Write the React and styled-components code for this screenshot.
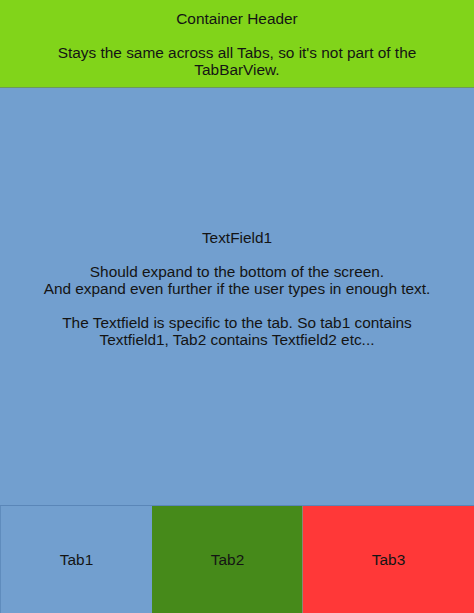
import React from 'react';
import styled, { createGlobalStyle } from 'styled-components';

const GlobalStyle = createGlobalStyle`
  html, body, #root {
    margin: 0;
    height: 100%;
  }
  body {
    font-family: 'Liberation Sans', Arial, sans-serif;
    font-size: 15.4px;
    line-height: 17px;
    color: #141414;
  }
`;

const Screen = styled.div`
  display: flex;
  flex-direction: column;
  height: 100%;
`;

const Header = styled.header`
  background: #81d41a;
  border-bottom: 1px solid #6d9a5a;
  padding: 10px 16px 9px;
  text-align: center;
`;

const Line = styled.p`
  margin: 0;
  & + & {
    margin-top: ${({ $gap }) => ($gap ? '17px' : '0')};
  }
`;

const TabBody = styled.main`
  flex: 1;
  background: #729fcf;
  display: flex;
  flex-direction: column;
  align-items: center;
  justify-content: center;
  padding-bottom: 16px;
  text-align: center;
`;

const TabBar = styled.nav`
  display: grid;
  grid-template-columns: 152px 150px 1fr;
  height: 107px;
  border-top: 1px solid #5a86b8;
`;

const Tab = styled.button`
  border: none;
  border-left: 1px solid ${({ $edge }) => $edge};
  background: ${({ $bg }) => $bg};
  font: inherit;
  color: #141414;
  padding: 0;
  display: flex;
  align-items: center;
  justify-content: center;
`;

const tabs = [
  { label: 'Tab1', bg: '#729fcf', edge: '#5f8cbd' },
  { label: 'Tab2', bg: '#468a1a', edge: '#468a1a' },
  { label: 'Tab3', bg: '#ff3838', edge: '#8a8a70' },
];

export default function App() {
  return (
    <Screen>
      <GlobalStyle />
      <Header>
        <Line>Container Header</Line>
        <Line $gap>
          Stays the same across all Tabs, so it's not part of the
          <br />
          TabBarView.
        </Line>
      </Header>
      <TabBody>
        <Line>TextField1</Line>
        <Line $gap>
          Should expand to the bottom of the screen.
          <br />
          And expand even further if the user types in enough text.
        </Line>
        <Line $gap>
          The Textfield is specific to the tab. So tab1 contains
          <br />
          Textfield1, Tab2 contains Textfield2 etc...
        </Line>
      </TabBody>
      <TabBar>
        {tabs.map((t) => (
          <Tab key={t.label} $bg={t.bg} $edge={t.edge}>
            {t.label}
          </Tab>
        ))}
      </TabBar>
    </Screen>
  );
}
